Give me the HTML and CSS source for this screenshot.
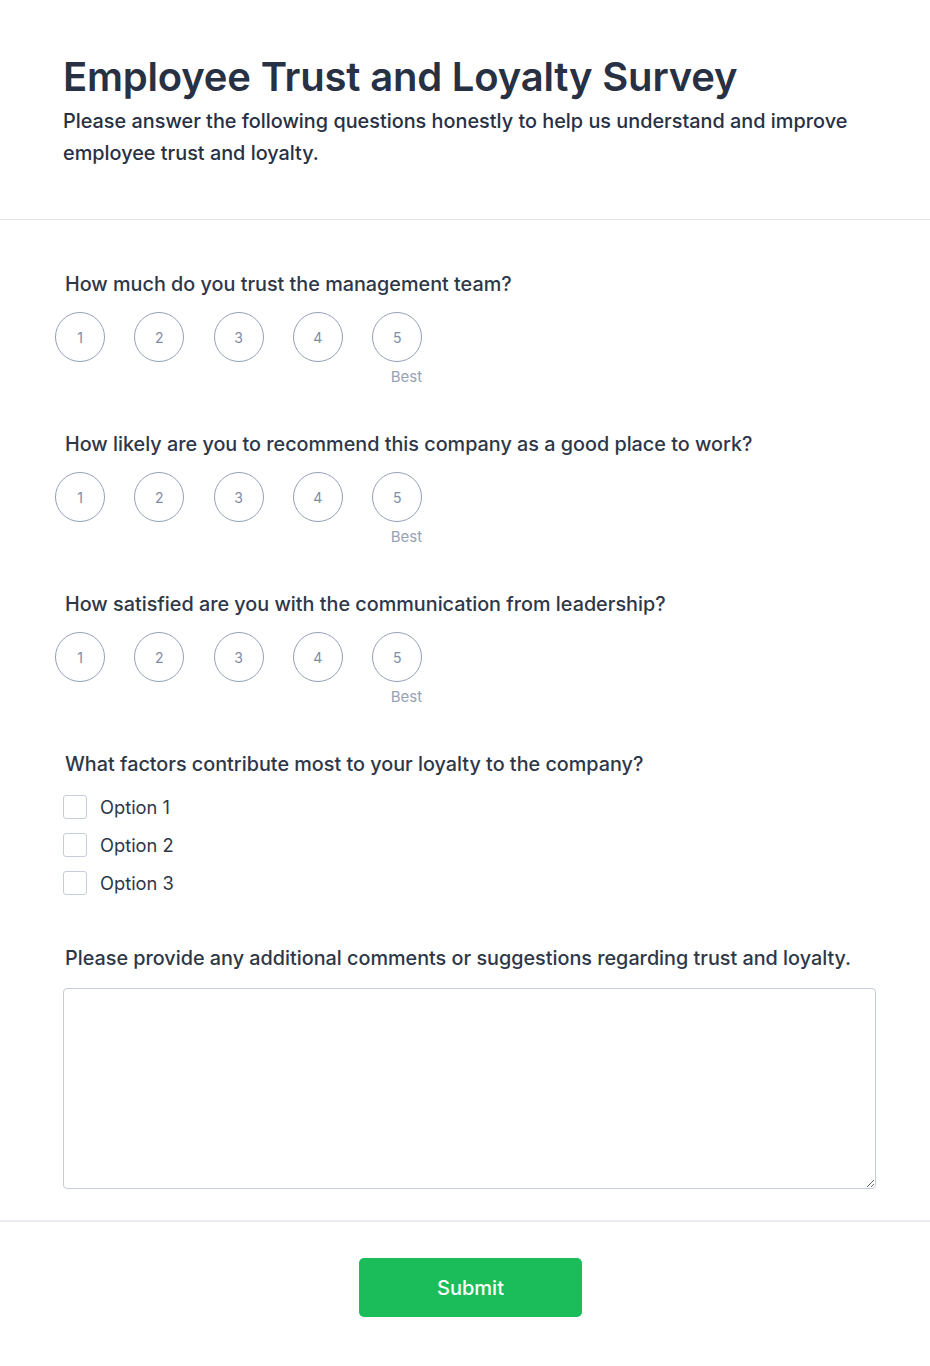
FILE: index.html
```html
<!doctype html>
<html lang="en">
  <head>
    <meta charset="UTF-8" />
    <meta name="viewport" content="width=device-width, initial-scale=1.0" />
    <title>Employee Trust and Loyalty Survey</title>
    <link rel="stylesheet" href="styles.css">
  </head>
  <body>
    <header class="survey-header">
      <h1>Employee Trust and Loyalty Survey</h1>
      <p class="intro">Please answer the following questions honestly to help us understand and improve employee trust and loyalty.</p>
    </header>

    <form class="survey-body">
      <div class="question">
        <label class="question-label">How much do you trust the management team?</label>
        <div class="rating">
          <div class="rating-row">
            <button type="button" class="rate">1</button>
            <button type="button" class="rate">2</button>
            <button type="button" class="rate">3</button>
            <button type="button" class="rate">4</button>
            <button type="button" class="rate">5</button>
          </div>
          <span class="rating-hint">Best</span>
        </div>
      </div>

      <div class="question">
        <label class="question-label">How likely are you to recommend this company as a good place to work?</label>
        <div class="rating">
          <div class="rating-row">
            <button type="button" class="rate">1</button>
            <button type="button" class="rate">2</button>
            <button type="button" class="rate">3</button>
            <button type="button" class="rate">4</button>
            <button type="button" class="rate">5</button>
          </div>
          <span class="rating-hint">Best</span>
        </div>
      </div>

      <div class="question">
        <label class="question-label">How satisfied are you with the communication from leadership?</label>
        <div class="rating">
          <div class="rating-row">
            <button type="button" class="rate">1</button>
            <button type="button" class="rate">2</button>
            <button type="button" class="rate">3</button>
            <button type="button" class="rate">4</button>
            <button type="button" class="rate">5</button>
          </div>
          <span class="rating-hint">Best</span>
        </div>
      </div>

      <div class="question question-options">
        <label class="question-label">What factors contribute most to your loyalty to the company?</label>
        <div class="options">
          <label class="option"><span class="box"></span>Option 1</label>
          <label class="option"><span class="box"></span>Option 2</label>
          <label class="option"><span class="box"></span>Option 3</label>
        </div>
      </div>

      <div class="question question-comments">
        <label class="question-label" for="comments">Please provide any additional comments or suggestions regarding trust and loyalty.</label>
        <textarea id="comments" class="comments"></textarea>
      </div>
    </form>

    <footer class="survey-footer">
      <button type="submit" class="submit-btn">Submit</button>
    </footer>
  </body>
</html>
```

FILE: styles.css
```css
* {
  margin: 0;
  padding: 0;
  box-sizing: border-box;
}

body {
  font-family: Inter, 'Noto Sans', sans-serif;
  color: #2d3748;
  background: #ffffff;
  width: 930px;
}

.survey-header {
  padding: 53px 63px 50px;
  border-bottom: 1px solid #dfe3ea;
}

h1 {
  font-size: 40px;
  font-weight: 600;
  line-height: 48px;
  letter-spacing: -0.2px;
  color: #283044;
  margin-bottom: 4px;
}

.intro {
  font-size: 19.85px;
  font-weight: 500;
  line-height: 32px;
  color: #283044;
}

.survey-body {
  padding: 52px 54px 31px 63px;
  border-bottom: 2px solid #ececf3;
}

.question {
  margin-bottom: 45px;
}

.question-label {
  display: block;
  padding-left: 2px;
  font-size: 19.8px;
  font-weight: 500;
  line-height: 24px;
  color: #2d3748;
}

.rating {
  display: inline-flex;
  flex-direction: column;
  align-items: flex-end;
  margin-top: 16px;
  margin-left: -8px;
}

.rating-row {
  display: flex;
  gap: 29.3px;
}

.rate {
  width: 50px;
  height: 50px;
  border-radius: 50%;
  border: 1px solid #95a0b4;
  background: #ffffff;
  font-family: Inter, sans-serif;
  font-size: 14px;
  color: #7f8ca3;
  cursor: pointer;
}

.rating-hint {
  font-size: 15px;
  line-height: 20px;
  margin-top: 5px;
  color: #98a3b6;
}

.options {
  display: flex;
  flex-direction: column;
  gap: 14px;
  margin-top: 19px;
}

.option {
  display: flex;
  align-items: center;
  gap: 13px;
  font-size: 18.3px;
  line-height: 24px;
  color: #2d3748;
}

.box {
  width: 24px;
  height: 24px;
  border: 1px solid #c6ccd8;
  border-radius: 3px;
  background: #ffffff;
}

.question-options {
  margin-bottom: 51px;
}

.question-comments {
  margin-bottom: 0;
}

.comments {
  display: block;
  width: 813px;
  height: 201px;
  margin-top: 18px;
  border: 1px solid #c6ccd8;
  border-radius: 4px;
  font-family: Inter, sans-serif;
  font-size: 16px;
  resize: vertical;
}

.survey-footer {
  padding: 36px 52px 49px 63px;
  display: flex;
  justify-content: center;
}

.submit-btn {
  width: 223px;
  height: 59px;
  border: none;
  border-radius: 5px;
  background: #1bbd5b;
  color: #ffffff;
  font-family: Inter, sans-serif;
  font-size: 20px;
  font-weight: 500;
  cursor: pointer;
}
```
